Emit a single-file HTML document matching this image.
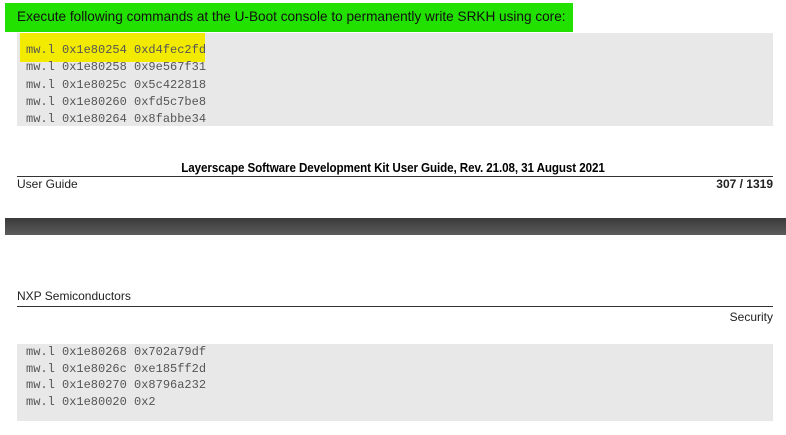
<!DOCTYPE html>
<html><head><style>
body{margin:0;width:786px;height:435px;background:#fff;position:relative;overflow:hidden;font-family:"Liberation Sans",sans-serif}
.a{position:absolute}
.code{font-family:"Liberation Mono",monospace;font-size:12px;color:#555;white-space:pre}
</style></head><body>
<div class="a" style="left:5px;top:3px;width:568px;height:29px;background:#22e000"></div>
<div class="a" style="left:17px;top:9px;font-size:13.6px;color:#111">Execute following commands at the U-Boot console to permanently write SRKH using core:</div>
<div class="a" style="left:17px;top:33px;width:756px;height:93px;background:#e8e8e8"></div>
<div class="a" style="left:20px;top:33px;width:185px;height:29px;background:#f2ea00"></div>
<div class="a code" style="left:26px;top:42px;line-height:17.3px">mw.l 0x1e80254 0xd4fec2fd
mw.l 0x1e80258 0x9e567f31
mw.l 0x1e8025c 0x5c422818
mw.l 0x1e80260 0xfd5c7be8
mw.l 0x1e80264 0x8fabbe34</div>
<div class="a" style="left:0;width:786px;top:161px;text-align:center;font-size:12.5px;font-weight:bold;color:#000;letter-spacing:-0.1px;transform:scaleX(0.93)">Layerscape Software Development Kit User Guide, Rev. 21.08, 31 August 2021</div>
<div class="a" style="left:17px;top:176px;width:756px;height:1px;background:#333"></div>
<div class="a" style="left:17px;top:177px;font-size:12px;color:#222">User Guide</div>
<div class="a" style="right:13px;top:177px;font-size:12px;font-weight:bold;color:#222">307 / 1319</div>
<div class="a" style="left:5px;top:218px;width:781px;height:17px;background:linear-gradient(#3a3a3a,#5c5c5c)"></div>
<div class="a" style="left:17px;top:289px;font-size:12px;color:#222">NXP Semiconductors</div>
<div class="a" style="left:17px;top:306px;width:756px;height:1px;background:#333"></div>
<div class="a" style="right:13px;top:310px;font-size:12px;color:#222">Security</div>
<div class="a" style="left:17px;top:344px;width:756px;height:77px;background:#e8e8e8"></div>
<div class="a code" style="left:26px;top:344px;line-height:16.5px">mw.l 0x1e80268 0x702a79df
mw.l 0x1e8026c 0xe185ff2d
mw.l 0x1e80270 0x8796a232
mw.l 0x1e80020 0x2</div>
</body></html>
